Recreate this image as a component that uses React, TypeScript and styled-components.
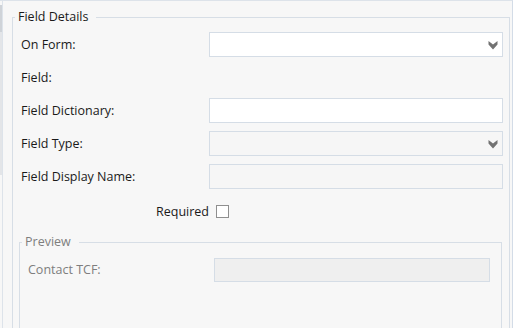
import React from "react";
import styled, { createGlobalStyle } from "styled-components";

const Global = createGlobalStyle`
  html, body { margin: 0; padding: 0; background: #f7f7f7; }
  body { font-family: "Open Sans", "Noto Sans", sans-serif; }
  * { box-sizing: border-box; }
`;

const Page = styled.div`
  display: flex;
  width: 513px;
  height: 328px;
  overflow: hidden;
  background: #f7f7f7;
`;

const Rail = styled.div`
  width: 2px;
  flex: none;
  display: flex;
  flex-direction: column;
  border-top: 1px solid #dde3ea;
`;

const RailPart = styled.div<{ $h: number; $c: string }>`
  height: ${(p) => p.$h}px;
  flex: none;
  background: ${(p) => p.$c};
`;

const Panel = styled.div`
  flex: 1;
  min-width: 0;
  border-top: 1px solid #dde3ea;
  border-left: 1px solid #dde3ea;
  border-right: 1px solid #d3dce7;
  padding: 8px 2px 0 9px;
`;

const Fieldset = styled.fieldset<{ $inner?: boolean }>`
  margin: ${(p) => (p.$inner ? "18px 1px 0 -2px" : "0")};
  padding: ${(p) => (p.$inner ? "0 11px 0 8px" : "0 6px 0 8px")};
  border: 1px solid #d7dee6;
  min-width: 0;
  min-height: ${(p) => (p.$inner ? "120px" : "400px")};
`;

const Legend = styled.legend<{ $disabled?: boolean }>`
  margin-left: -6px;
  padding: 0 8px 0 3px;
  font-size: 12.5px;
  line-height: 16px;
  color: ${(p) => (p.$disabled ? "#7e7e7e" : "#1a1a1a")};
`;

const Rows = styled.div`
  display: flex;
  flex-direction: column;
  gap: 8px;
  margin-top: 7px;
`;

const Row = styled.div<{ $col?: number }>`
  display: grid;
  grid-template-columns: ${(p) => p.$col ?? 188}px 1fr;
  align-items: center;
  height: 25px;
`;

const Label = styled.span<{ $disabled?: boolean; $right?: boolean }>`
  font-size: 12.5px;
  color: ${(p) => (p.$disabled ? "#7e7e7e" : "#1a1a1a")};
  text-align: ${(p) => (p.$right ? "right" : "left")};
  white-space: nowrap;
`;

const Box = styled.div<{ $disabled?: boolean; $shade?: boolean; $h?: number }>`
  position: relative;
  height: ${(p) => p.$h ?? 25}px;
  border: 1px solid #d5dde6;
  background: ${(p) => (p.$shade ? "#efefef" : p.$disabled ? "#f6f6f6" : "#ffffff")};
`;

const Chevron = styled.svg`
  position: absolute;
  right: 4px;
  top: 50%;
  margin-top: -5px;
  width: 10px;
  height: 10px;
`;

const CheckRow = styled.div`
  display: grid;
  grid-template-columns: 188px 1fr;
  align-items: center;
  margin-top: 14px;
  height: 13px;
`;

const Check = styled.div`
  width: 13px;
  height: 13px;
  margin-left: 7px;
  border: 1px solid #8f8f8f;
  background: #fff;
`;

const PreviewRows = styled.div`
  margin-top: 7px;
`;

const Arrow = () => (
  <Chevron viewBox="0 0 10 10">
    <polygon points="0.5,1 5,4.5 9.5,1 9.5,4.5 5,9.5 0.5,4.5" fill="#727272" />
  </Chevron>
);

export default function App() {
  return (
    <>
      <Global />
      <Page>
        <Rail>
          <RailPart $h={4} $c="#f7f7f7" />
          <RailPart $h={27} $c="#cfd3d8" />
          <RailPart $h={143} $c="#e3e5e8" />
        </Rail>
        <Panel>
          <Fieldset>
            <Legend>Field Details</Legend>
            <Rows>
              <Row>
                <Label>On Form:</Label>
                <Box>
                  <Arrow />
                </Box>
              </Row>
              <Row>
                <Label>Field:</Label>
                <span />
              </Row>
              <Row>
                <Label>Field Dictionary:</Label>
                <Box />
              </Row>
              <Row>
                <Label>Field Type:</Label>
                <Box $disabled>
                  <Arrow />
                </Box>
              </Row>
              <Row>
                <Label>Field Display Name:</Label>
                <Box $disabled />
              </Row>
            </Rows>
            <CheckRow>
              <Label $right>Required</Label>
              <Check />
            </CheckRow>
            <Fieldset $inner>
              <Legend $disabled>Preview</Legend>
              <PreviewRows>
                <Row $col={186}>
                  <Label $disabled>Contact TCF:</Label>
                  <Box $shade $h={24} />
                </Row>
              </PreviewRows>
            </Fieldset>
          </Fieldset>
        </Panel>
      </Page>
    </>
  );
}
